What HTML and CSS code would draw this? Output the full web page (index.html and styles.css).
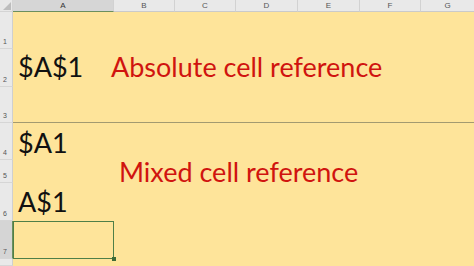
FILE: index.html
```html
<!DOCTYPE html>
<html>
<head>
<meta charset="utf-8">
<link rel="stylesheet" href="styles.css">
</head>
<body>
<div class="sheet">
  <div class="corner"><span class="tri"></span></div>
  <div class="colh sel">A</div>
  <div class="colh">B</div>
  <div class="colh">C</div>
  <div class="colh">D</div>
  <div class="colh">E</div>
  <div class="colh">F</div>
  <div class="colh last">G</div>

  <div class="rowh r1">1</div>
  <div class="rowh r2">2</div>
  <div class="rowh r3">3</div>
  <div class="rowh r4">4</div>
  <div class="rowh r5">5</div>
  <div class="rowh r6">6</div>
  <div class="rowh r7 sel">7</div>
  <div class="rowh r8"></div>

  <div class="fill"></div>
  <div class="divider"></div>

  <div class="txt t-abs">$A$1</div>
  <div class="txt red t-abs-label">Absolute cell reference</div>
  <div class="txt t-mixa">$A1</div>
  <div class="txt red t-mixed-label">Mixed cell reference</div>
  <div class="txt t-mixb">A$1</div>

  <div class="cursor"><span class="handle"></span></div>
</div>
</body>
</html>
```
FILE: styles.css
```css
html, body {
  margin: 0;
  padding: 0;
  width: 474px;
  height: 266px;
  overflow: hidden;
  background: #ffffff;
}

.sheet {
  display: grid;
  grid-template-columns: 13px 101px 61px 61px 62px 62px 61px 1fr;
  grid-template-rows: 12px 37px 38px 36px 37px 23px 38px 38px 1fr;
  width: 474px;
  height: 266px;
  font-family: "Lato", "Open Sans", sans-serif;
}

.corner {
  grid-column: 1;
  grid-row: 1;
  background: #e8e8e8;
  border-right: 1px solid #d4d4d4;
  border-bottom: 1px solid #d4d4d4;
  box-sizing: border-box;
  position: relative;
}
.tri {
  position: absolute;
  right: 1px;
  bottom: 1px;
  width: 0;
  height: 0;
  border-left: 8px solid transparent;
  border-bottom: 8px solid #bdbdbd;
}

.colh {
  grid-row: 1;
  background: #e9e9e9;
  border-right: 1px solid #d2d2d2;
  border-bottom: 1px solid #cacaca;
  box-sizing: border-box;
  font-size: 8px;
  line-height: 11px;
  color: #555;
  text-align: center;
  font-family: "Liberation Sans", sans-serif;
}
.colh.sel {
  background: #d6d6d6;
  color: #333;
  border-bottom: 1px solid #6b8f5e;
}
.colh.last { border-right: none; }

.rowh {
  grid-column: 1;
  background: #e9e9e9;
  border-right: 1px solid #cfcfcf;
  border-bottom: 1px solid #d6d6d6;
  box-sizing: border-box;
  font-size: 7px;
  color: #555;
  display: flex;
  align-items: flex-end;
  padding: 0 0 3px 3px;
  font-family: "Liberation Sans", sans-serif;
}
.rowh.sel {
  background: #d5d5d5;
  border-right: 1px solid #6b8f5e;
}
.r1 { grid-row: 2; }
.r2 { grid-row: 3; }
.r3 { grid-row: 4; }
.r4 { grid-row: 5; }
.r5 { grid-row: 6; }
.r6 { grid-row: 7; }
.r7 { grid-row: 8; }
.r8 { grid-row: 9; }

.fill {
  grid-column: 2 / -1;
  grid-row: 2 / -1;
  background: #fee49a;
}

.divider {
  grid-column: 2 / -1;
  grid-row: 4;
  border-bottom: 1px solid #a39a70;
}

.txt {
  white-space: nowrap;
  font-size: 27px;
  line-height: 1;
  color: #111;
  align-self: end;
  z-index: 1;
}
.red { color: #d0140f; }

.t-abs {
  grid-column: 2 / 4;
  grid-row: 3;
  padding: 0 0 7px 5px;
}
.t-abs-label {
  grid-column: 2 / -1;
  grid-row: 3;
  padding: 0 0 7px 98px;
}
.t-mixa {
  grid-column: 2 / 4;
  grid-row: 5;
  padding: 0 0 4px 5px;
}
.t-mixed-label {
  grid-column: 2 / -1;
  grid-row: 6;
  margin-bottom: -2px;
  padding: 0 0 0 106px;
}
.t-mixb {
  grid-column: 2 / 4;
  grid-row: 7;
  padding: 0 0 6px 5px;
}

.cursor {
  grid-column: 2;
  grid-row: 8;
  border: 1px solid #4f7f47;
  box-sizing: border-box;
  position: relative;
}
.handle {
  position: absolute;
  right: -3px;
  bottom: -3px;
  width: 4px;
  height: 4px;
  background: #3e6b37;
}
```
